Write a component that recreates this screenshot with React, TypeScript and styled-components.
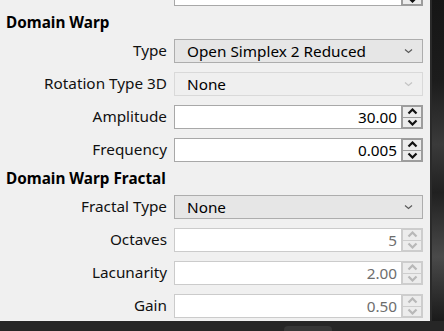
import React from "react";
import styled, { createGlobalStyle } from "styled-components";

const GlobalStyle = createGlobalStyle`
  html, body {
    margin: 0;
    padding: 0;
    background: #1e1e1e;
  }
  body {
    font-family: "Noto Sans", "Open Sans", sans-serif;
    color: #000;
  }
`;

const Screen = styled.div`
  width: 444px;
  height: 331px;
  display: grid;
  grid-template-columns: 430px 14px;
  grid-template-rows: 321px 10px;
  overflow: hidden;
`;

const Panel = styled.div`
  background: #f0f0f0;
  overflow: hidden;
`;

const Backdrop = styled.div`
  background: linear-gradient(
    180deg,
    #161616 0%,
    #1c1c1c 25%,
    #3a3a3a 45%,
    #202020 60%,
    #4a4a4a 80%,
    #1a1a1a 100%
  );
  box-shadow: inset 2px 0 0 #2a2a2a;
`;

const TaskBar = styled.div`
  grid-column: 1 / -1;
  background: #262626;
  display: flex;
  align-items: flex-end;
  padding-left: 284px;
`;

const Tab = styled.div`
  width: 48px;
  height: 5px;
  background: #363636;
  border-radius: 4px 4px 0 0;
`;

const Form = styled.div`
  display: flex;
  flex-direction: column;
  gap: 9px;
  margin-top: -18px;
  padding: 0 7px 0 6px;
`;

const Heading = styled.div`
  height: 15px;
  line-height: 15px;
  font-size: 15.3px;
  font-weight: 700;
  white-space: nowrap;
`;

const Row = styled.div`
  display: grid;
  grid-template-columns: 161px 249px;
  column-gap: 7px;
  height: 24px;
`;

const Label = styled.div`
  text-align: right;
  font-size: 15.3px;
  line-height: 23px;
  white-space: nowrap;
  color: #111;
`;

const Combo = styled.div<{ $disabled?: boolean }>`
  box-sizing: border-box;
  height: 24px;
  display: flex;
  align-items: center;
  justify-content: space-between;
  padding: 0 9px 0 12px;
  border: 1px solid ${(p) => (p.$disabled ? "#d9d9d9" : "#adadad")};
  background: ${(p) => (p.$disabled ? "#efefef" : "#e6e6e6")};
  font-size: 15.3px;
  color: #000;
`;

const Spin = styled.div<{ $disabled?: boolean }>`
  box-sizing: border-box;
  height: 24px;
  display: flex;
  border: 1px solid ${(p) => (p.$disabled ? "#cbcbcb" : "#a8a8a8")};
  background: #fff;
`;

const Value = styled.div<{ $disabled?: boolean }>`
  flex: 1;
  text-align: right;
  padding-right: 4px;
  font-size: 15.3px;
  line-height: 22px;
  color: ${(p) => (p.$disabled ? "#6d6d6d" : "#000")};
`;

const Buttons = styled.div<{ $disabled?: boolean }>`
  box-sizing: border-box;
  width: 22px;
  display: flex;
  flex-direction: column;
  border: 2px solid ${(p) => (p.$disabled ? "#cdcdcd" : "#9d9d9d")};
  margin: -1px -1px -1px 0;
  background: #ececec;
`;

const Half = styled.div<{ $disabled?: boolean; $top?: boolean }>`
  flex: 1;
  display: flex;
  align-items: center;
  justify-content: center;
  border-bottom: ${(p) =>
    p.$top ? `1px solid ${p.$disabled ? "#cdcdcd" : "#9d9d9d"}` : "none"};
`;

const Chevron = ({ light }: { light?: boolean }) => (
  <svg width="9" height="6" viewBox="0 0 9 6">
    <polyline
      points="1,1.5 4.5,4.5 8,1.5"
      fill="none"
      stroke={light ? "#c4c4c4" : "#5a5a5a"}
      strokeWidth="1.2"
    />
  </svg>
);

const Arrow = ({ up, light }: { up?: boolean; light?: boolean }) => (
  <svg width="11" height="7" viewBox="0 0 11 7">
    <polyline
      points={up ? "1.5,5.5 5.5,1.5 9.5,5.5" : "1.5,1.5 5.5,5.5 9.5,1.5"}
      fill="none"
      stroke={light ? "#b8b8b8" : "#111"}
      strokeWidth="2.2"
    />
  </svg>
);

const SpinBox = ({ value, disabled }: { value: string; disabled?: boolean }) => (
  <Spin $disabled={disabled}>
    <Value $disabled={disabled}>{value}</Value>
    <Buttons $disabled={disabled}>
      <Half $top $disabled={disabled}>
        <Arrow up light={disabled} />
      </Half>
      <Half $disabled={disabled}>
        <Arrow light={disabled} />
      </Half>
    </Buttons>
  </Spin>
);

const ComboBox = ({ value, disabled }: { value: string; disabled?: boolean }) => (
  <Combo $disabled={disabled}>
    <span>{value}</span>
    <Chevron light={disabled} />
  </Combo>
);

export default function App() {
  return (
    <>
      <GlobalStyle />
      <Screen>
        <Panel>
          <Form>
            <Row>
              <Label />
              <SpinBox value="1.00" />
            </Row>
            <Heading>Domain Warp</Heading>
            <Row>
              <Label>Type</Label>
              <ComboBox value="Open Simplex 2 Reduced" />
            </Row>
            <Row>
              <Label>Rotation Type 3D</Label>
              <ComboBox value="None" disabled />
            </Row>
            <Row>
              <Label>Amplitude</Label>
              <SpinBox value="30.00" />
            </Row>
            <Row>
              <Label>Frequency</Label>
              <SpinBox value="0.005" />
            </Row>
            <Heading>Domain Warp Fractal</Heading>
            <Row>
              <Label>Fractal Type</Label>
              <ComboBox value="None" />
            </Row>
            <Row>
              <Label>Octaves</Label>
              <SpinBox value="5" disabled />
            </Row>
            <Row>
              <Label>Lacunarity</Label>
              <SpinBox value="2.00" disabled />
            </Row>
            <Row>
              <Label>Gain</Label>
              <SpinBox value="0.50" disabled />
            </Row>
          </Form>
        </Panel>
        <Backdrop />
        <TaskBar>
          <Tab />
        </TaskBar>
      </Screen>
    </>
  );
}
